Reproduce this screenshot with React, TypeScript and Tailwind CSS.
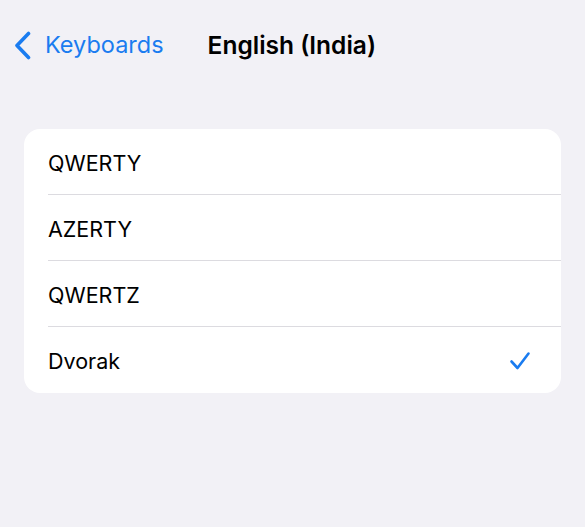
import React from 'react'

const layouts = ['QWERTY', 'AZERTY', 'QWERTZ', 'Dvorak']

export default function App() {
  const selected = 'Dvorak'

  return (
    <div
      className="w-[585px] h-[527px] bg-[#f2f1f6] overflow-hidden"
      style={{ fontFamily: 'Inter, "Liberation Sans", sans-serif' }}
    >
      {/* Nav bar */}
      <div className="h-[90px] flex items-start pt-[30px]">
        <button className="flex items-center pl-[13px] text-[#1a7cf0]">
          <svg width="19" height="29" viewBox="0 0 19 29" fill="none">
            <path d="M15.5 2.5 L4 14.5 L15.5 26.5" stroke="#1a7cf0" strokeWidth="3.6" strokeLinecap="round" strokeLinejoin="round" />
          </svg>
          <span className="ml-[13px] text-[23.5px] leading-[30px]">Keyboards</span>
        </button>
        <h1 className="ml-[44px] text-[24.5px] leading-[30px] font-semibold text-black">
          English (India)
        </h1>
      </div>

      {/* List */}
      <div className="mx-[24px] mt-[39px] bg-white rounded-[16px] overflow-hidden">
        {layouts.map((name, i) => (
          <div key={name} className="pl-[24px]">
            <div
              className={`h-[66px] flex items-center justify-between pr-[30px] ${
                i < layouts.length - 1 ? 'border-b border-[#dcdbe0]' : ''
              }`}
            >
              <span className="text-[21.5px] text-black pt-[3px]">{name}</span>
              {name === selected && (
                <svg width="22" height="20" viewBox="0 0 22 20" fill="none" className="mt-[2px]">
                  <path d="M2.5 10.5 L8.5 17 L19.5 2.5" stroke="#1a7cf0" strokeWidth="2.6" strokeLinecap="round" strokeLinejoin="round" />
                </svg>
              )}
            </div>
          </div>
        ))}
      </div>
    </div>
  )
}
